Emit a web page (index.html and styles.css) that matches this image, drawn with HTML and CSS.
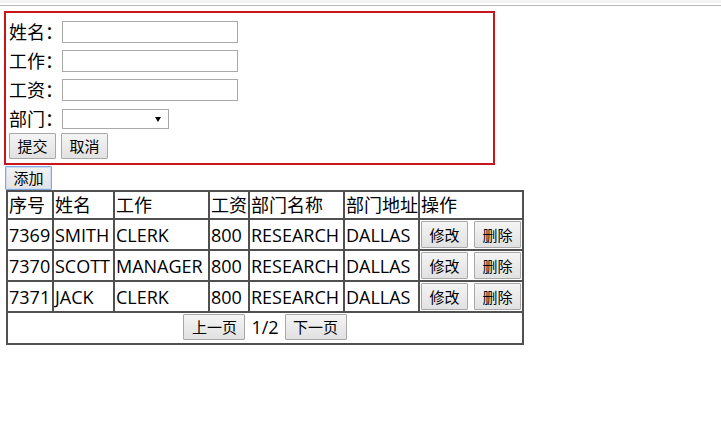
FILE: index.html
```html
<!DOCTYPE html>
<html lang="zh">
<head>
<meta charset="utf-8">
<title>员工管理</title>
<link rel="stylesheet" href="styles.css">
</head>
<body>
<div class="topbar"></div>
<main class="page">
  <form class="emp-form">
    <div class="field"><label class="lbl">姓名：</label><input class="txt" type="text"></div>
    <div class="field"><label class="lbl">工作：</label><input class="txt" type="text"></div>
    <div class="field"><label class="lbl">工资：</label><input class="txt" type="text"></div>
    <div class="field"><label class="lbl">部门：</label><span class="sel-wrap"><select class="sel"><option></option></select><span class="sel-arrow"></span></span></div>
    <div class="actions"><button type="button" class="btn">提交</button><button type="button" class="btn">取消</button></div>
  </form>
  <button type="button" class="btn btn-add">添加</button>
  <table class="grid">
    <thead>
      <tr><th class="c1">序号</th><th class="c2">姓名</th><th class="c3">工作</th><th class="c4">工资</th><th class="c5">部门名称</th><th class="c6">部门地址</th><th class="c7">操作</th></tr>
    </thead>
    <tbody>
      <tr><td>7369</td><td>SMITH</td><td>CLERK</td><td>800</td><td>RESEARCH</td><td>DALLAS</td><td><div class="ops"><button type="button" class="btn btn-op">修改</button><button type="button" class="btn btn-op">删除</button></div></td></tr>
      <tr><td>7370</td><td>SCOTT</td><td>MANAGER</td><td>800</td><td>RESEARCH</td><td>DALLAS</td><td><div class="ops"><button type="button" class="btn btn-op">修改</button><button type="button" class="btn btn-op">删除</button></div></td></tr>
      <tr><td>7371</td><td>JACK</td><td>CLERK</td><td>800</td><td>RESEARCH</td><td>DALLAS</td><td><div class="ops"><button type="button" class="btn btn-op">修改</button><button type="button" class="btn btn-op">删除</button></div></td></tr>
      <tr><td colspan="7"><div class="pager"><button type="button" class="btn btn-page">上一页</button><span class="pnum">1/2</span><button type="button" class="btn btn-page">下一页</button></div></td></tr>
    </tbody>
  </table>
</main>
</body>
</html>
```
FILE: styles.css
```css
html, body {
  margin: 0;
  padding: 0;
  background: #fff;
}
body {
  font-family: "Open Sans", "Noto Sans CJK SC", sans-serif;
  font-size: 18px;
  color: #000;
}
.topbar {
  height: 5px;
  background: linear-gradient(#f3f3f3 0 3px, #fff 3px);
  border-bottom: 1px solid #b9b9b9;
}
.page {
  padding-left: 4px;
}
.emp-form {
  margin: 5px 0 0 0;
  width: 491px;
  box-sizing: border-box;
  border: 2px solid #c8161c;
  padding: 8px 0 4px 3px;
  display: flex;
  flex-direction: column;
}
.field {
  display: flex;
  align-items: center;
  height: 22px;
  margin-bottom: 7px;
}
.field:nth-child(4) {
  margin-bottom: 3px;
}
.lbl {
  width: 53px;
  white-space: nowrap;
  line-height: 22px;
}
.txt {
  width: 176px;
  height: 22px;
  box-sizing: border-box;
  border: 1px solid #a9a9a9;
  padding: 0 3px;
  margin: 0;
  background: #fff;
  outline: none;
}
.sel-wrap {
  position: relative;
  display: inline-block;
  height: 20px;
}
.sel {
  appearance: none;
  -webkit-appearance: none;
  width: 107px;
  height: 20px;
  box-sizing: border-box;
  border: 1px solid #a9a9a9;
  border-radius: 0;
  background: #fff;
  margin: 0;
  padding: 0 4px;
  display: block;
}
.sel-arrow {
  position: absolute;
  right: 8px;
  top: 8px;
  width: 0;
  height: 0;
  border-left: 3px solid transparent;
  border-right: 3px solid transparent;
  border-top: 5px solid #000;
}
.actions {
  display: flex;
  gap: 5px;
  height: 26px;
}
.btn {
  font-family: "Noto Sans CJK SC", sans-serif;
  font-size: 15px;
  color: #000;
  height: 26px;
  box-sizing: border-box;
  padding: 0 7.5px;
  margin: 0;
  border: 1px solid #a8a8a8;
  border-radius: 1px;
  background: linear-gradient(#f4f4f4, #e1e1e1);
  line-height: 22px;
  white-space: nowrap;
}
.btn-add {
  display: block;
  height: 24px;
  margin: 1px 0 0 1px;
  border: 1px solid #7fa9e0;
  box-shadow: inset 0 0 0 1px #cddcf0;
  background: linear-gradient(#f2f2f2, #e3e3e3);
}
.grid {
  margin: 0 0 0 2px;
  width: 518px;
  table-layout: fixed;
  border-collapse: separate;
  border-spacing: 0;
  border: 1px solid #505050;
}
.grid th, .grid td {
  box-sizing: border-box;
  border: 1px solid #505050;
  padding: 1px;
  font-weight: normal;
  text-align: left;
  line-height: 24px;
  white-space: nowrap;
  overflow: hidden;
  vertical-align: middle;
}
.c1 { width: 46px; }
.c2 { width: 61px; }
.c3 { width: 95px; }
.c4 { width: 40px; }
.c5 { width: 95px; }
.c6 { width: 75px; }
.c7 { width: 104px; }
.ops {
  display: flex;
  gap: 6px;
  height: 27px;
}
.btn-op {
  height: 27px;
  line-height: 23px;
}
.pager {
  display: flex;
  justify-content: center;
  align-items: flex-start;
  gap: 6px;
  height: 28px;
}
.pnum {
  line-height: 26px;
}
```
